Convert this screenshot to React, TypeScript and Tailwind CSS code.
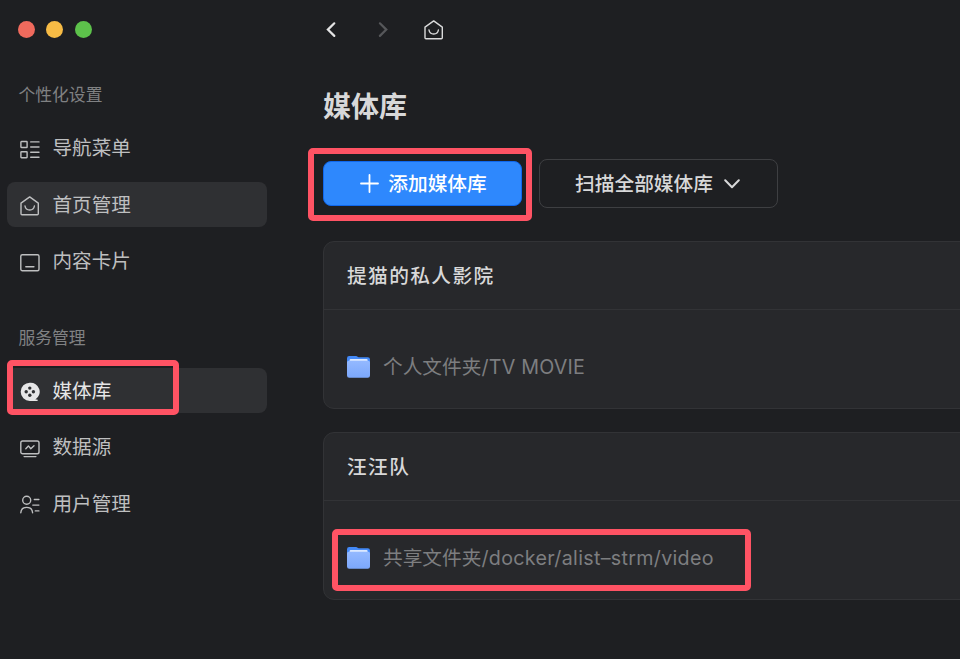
import type { ReactNode } from 'react';

type NavItem = {
  name: string;
  icon: ReactNode;
  active?: boolean;
  marked?: boolean;
  bright?: boolean;
};

const iconProps = {
  width: 20,
  height: 20,
  viewBox: '0 0 20 20',
  fill: 'none',
  stroke: 'currentColor',
  strokeWidth: 1.4,
  strokeLinecap: 'round' as const,
  strokeLinejoin: 'round' as const,
};

const MenuIcon = () => (
  <svg {...iconProps}>
    <rect x="0.9" y="1.5" width="6.2" height="6" rx="0.6" />
    <rect x="0.9" y="11.7" width="6.2" height="6" rx="0.6" />
    <path d="M10.7 1.9h8.3M10.7 7h8.3M10.7 12.2h8.3M10.7 17.3h8.3" />
  </svg>
);

const HomeIcon = () => (
  <svg {...iconProps}>
    <path d="M9.7 0.9 18.3 7.1V17.8a1 1 0 0 1-1 1H2a1 1 0 0 1-1-1V7.1Z" />
    <path d="M5 10c.4 2.4 2.3 4 4.7 4s4.3-1.6 4.7-4" />
  </svg>
);

const CardIcon = () => (
  <svg {...iconProps}>
    <rect x="0.8" y="1.7" width="18.2" height="16" rx="1.5" />
    <path d="M5.8 13.8h8.1" />
  </svg>
);

const ReelIcon = () => (
  <svg width="20" height="20" viewBox="0 0 20 20">
    <path fill="currentColor" d="M9.8 .7a9.1 9.1 0 1 0 0 18.2h7.3a.7.7 0 0 0 0-1.4h-1.7A9.1 9.1 0 0 0 9.8 .7Z" />
    <g fill="#2f3033">
      <circle cx="9.8" cy="6.1" r="1.7" />
      <circle cx="9.8" cy="13.3" r="1.7" />
      <circle cx="6.2" cy="9.7" r="1.7" />
      <circle cx="13.4" cy="9.7" r="1.7" />
    </g>
  </svg>
);

const SourceIcon = () => (
  <svg {...iconProps}>
    <rect x="0.8" y="2" width="18.2" height="12.8" rx="1.8" />
    <path d="M5.8 9.700 8.400 6.900 10.800 9.800 14 6.700" />
    <path d="M4.1 17.600h11.800" />
  </svg>
);

const UsersIcon = () => (
  <svg {...iconProps}>
    <circle cx="6.7" cy="5.3" r="4" />
    <path d="M0.8 17.800c.2-3.300 2.600-5.400 5.900-5.400s5.700 2.100 5.900 5.400" />
    <path d="M14.300 4.500h4.600M12.800 10.100h6.100M15.300 15.900h3.600" />
  </svg>
);

const FolderIcon = () => (
  <svg className="-mt-[2px]" width="24" height="22" viewBox="0 0 24 22">
    <defs>
      <linearGradient id="folder" x1="0" y1="0" x2="0" y2="1">
        <stop offset="0" stopColor="#94b9ff" />
        <stop offset="1" stopColor="#7ba7fb" />
      </linearGradient>
    </defs>
    <path fill="#4389f7" d="M0 2.2A2.2 2.2 0 0 1 2.2 0h7l2.4 1.2h9.200A2.2 2.2 0 0 1 23 3.400V12H0Z" />
    <rect x="2.6" y="3" width="18" height="4" rx="1" fill="#dce9ff" />
    <path fill="url(#folder)" d="M0 6.400A1.700 1.700 0 0 1 1.700 4.700h19.600A1.700 1.700 0 0 1 23 6.400v13.100a2.300 2.300 0 0 1-2.300 2.300H2.300A2.300 2.300 0 0 1 0 19.500Z" />
  </svg>
);

const personalLinks: NavItem[] = [
  { name: '导航菜单', icon: <MenuIcon /> },
  { name: '首页管理', icon: <HomeIcon />, active: true },
  { name: '内容卡片', icon: <CardIcon /> },
];

const serviceLinks: NavItem[] = [
  { name: '媒体库', icon: <ReelIcon />, active: true, marked: true, bright: true },
  { name: '数据源', icon: <SourceIcon /> },
  { name: '用户管理', icon: <UsersIcon /> },
];

const libraries = [
  { name: '提猫的私人影院', folder: '个人文件夹', path: '/TV MOVIE', pathClass: 'tracking-[0.2px]' },
  { name: '汪汪队', folder: '共享文件夹', path: '/docker/alist–strm/video', pathClass: 'tracking-[0.3px]', marked: true },
];

// red frame drawn over the item it points at
function Marker({ className }: { className: string }) {
  return <div className={`pointer-events-none absolute rounded-[5px] border-6 border-[#ff5364] ${className}`} />;
}

function NavGroup({ title, items }: { title: string; items: NavItem[] }) {
  return (
    <section>
      <h2 className="flex h-6 items-center pt-[1px] pl-[11.5px] text-[16.8px] text-[#808183]">{title}</h2>
      <ul className="mt-[18.5px] flex flex-col gap-[11.6px]">
        {items.map((item) => (
          <li
            key={item.name}
            className={`relative flex h-[45px] items-center rounded-[8px] pl-[12.5px] text-[19.6px] ${
              item.active ? 'bg-[#2f3033]' : ''
            } ${item.bright ? 'text-[#e6e6e7]' : 'text-[#bebfc0]'}`}
          >
            <span className="mt-[3px] w-[33px] shrink-0">{item.icon}</span>
            <span className="pt-[2px] leading-none">{item.name}</span>
            {item.marked && <Marker className="-top-[8px] left-0 h-[55px] w-[172px]" />}
          </li>
        ))}
      </ul>
    </section>
  );
}

export default function App() {
  return (
    <div className="flex h-[659px] w-[960px] overflow-hidden bg-[#1e1f22] font-['Inter','Noto_Sans_CJK_SC',sans-serif]">
      <aside className="w-[323px] shrink-0 pl-[7px]">
        <div className="flex gap-[11.2px] pt-[21px] pl-[11.3px]">
          <span className="size-[17px] rounded-full bg-[#f06a5d]" />
          <span className="size-[17px] rounded-full bg-[#f7bb45]" />
          <span className="size-[17px] rounded-full bg-[#5dc24b]" />
        </div>
        <nav className="flex w-[260px] flex-col gap-[42px] pt-[45px]">
          <NavGroup title="个性化设置" items={personalLinks} />
          <NavGroup title="服务管理" items={serviceLinks} />
        </nav>
      </aside>

      <main className="min-w-0 flex-1">
        <div className="flex h-[60px] items-center">
          <svg width="16" height="20" viewBox="0 0 16 20" fill="none" stroke="#e4e4e5" strokeWidth="2.2" strokeLinecap="round">
            <path d="M11.3 3.300 4.900 9.600l6.400 6.300" />
          </svg>
          <svg className="ml-[36px]" width="16" height="20" viewBox="0 0 16 20" fill="none" stroke="#56575a" strokeWidth="2.2" strokeLinecap="round">
            <path d="M4.900 3.300 11.300 9.600l-6.400 6.300" />
          </svg>
          <span className="ml-[32.5px] text-[#dadadb]">
            <HomeIcon />
          </span>
        </div>

        <h1 className="mt-[25px] h-[40px] pt-[2px] text-[28px] leading-[40px] font-bold text-[#d8d8d9]">媒体库</h1>

        <div className="mt-[34px] flex items-center text-[19.7px] font-medium">
          <div className="relative">
            <button className="flex h-[45px] w-[199px] items-center justify-center gap-[9px] rounded-[8px] border border-[#0f68ee] bg-[#2e88fd] pl-[2px] text-white">
              <svg width="19" height="19" viewBox="0 0 19 19" fill="none" stroke="currentColor" strokeWidth="1.8" strokeLinecap="round">
                <path d="M9.500 1v17M1 9.500h17" />
              </svg>
              <span className="pt-[2px]">添加媒体库</span>
            </button>
            <Marker className="-top-[13px] -left-[15px] h-[73px] w-[224px]" />
          </div>
          <button className="ml-[17px] flex h-[49px] w-[239px] items-center justify-center gap-[11px] rounded-[8px] border border-[#3e3f42] pr-[2px] text-[#d8d8d9]">
            <span className="pt-[2px]">扫描全部媒体库</span>
            <svg width="16" height="10" viewBox="0 0 16 10" fill="none" stroke="currentColor" strokeWidth="2" strokeLinecap="round" strokeLinejoin="round">
              <path d="M1.200 1.300 8 8.200l6.800-6.900" />
            </svg>
          </button>
        </div>

        <div className="mt-[33px] flex w-[660px] flex-col gap-[23px]">
          {libraries.map((lib) => (
            <section key={lib.name} className="h-[168px] rounded-[11px] border border-[#323336] bg-[#27282b]">
              <h2 className="flex h-[68px] items-center border-b border-[#323336] pt-[2px] pl-[23px] text-[19.7px] font-medium tracking-[1.4px] text-[#d8d8d9]">
                {lib.name}
              </h2>
              <div className="relative flex h-[98px] items-center pt-[18px] pl-[23px] text-[19.7px] text-[#7d7e80]">
                <FolderIcon />
                <p className="ml-[12px] whitespace-nowrap">
                  {lib.folder}
                  <span className={lib.pathClass}>{lib.path}</span>
                </p>
                {lib.marked && <Marker className="top-[28px] left-[8px] h-[62px] w-[419px]" />}
              </div>
            </section>
          ))}
        </div>
      </main>
    </div>
  );
}
